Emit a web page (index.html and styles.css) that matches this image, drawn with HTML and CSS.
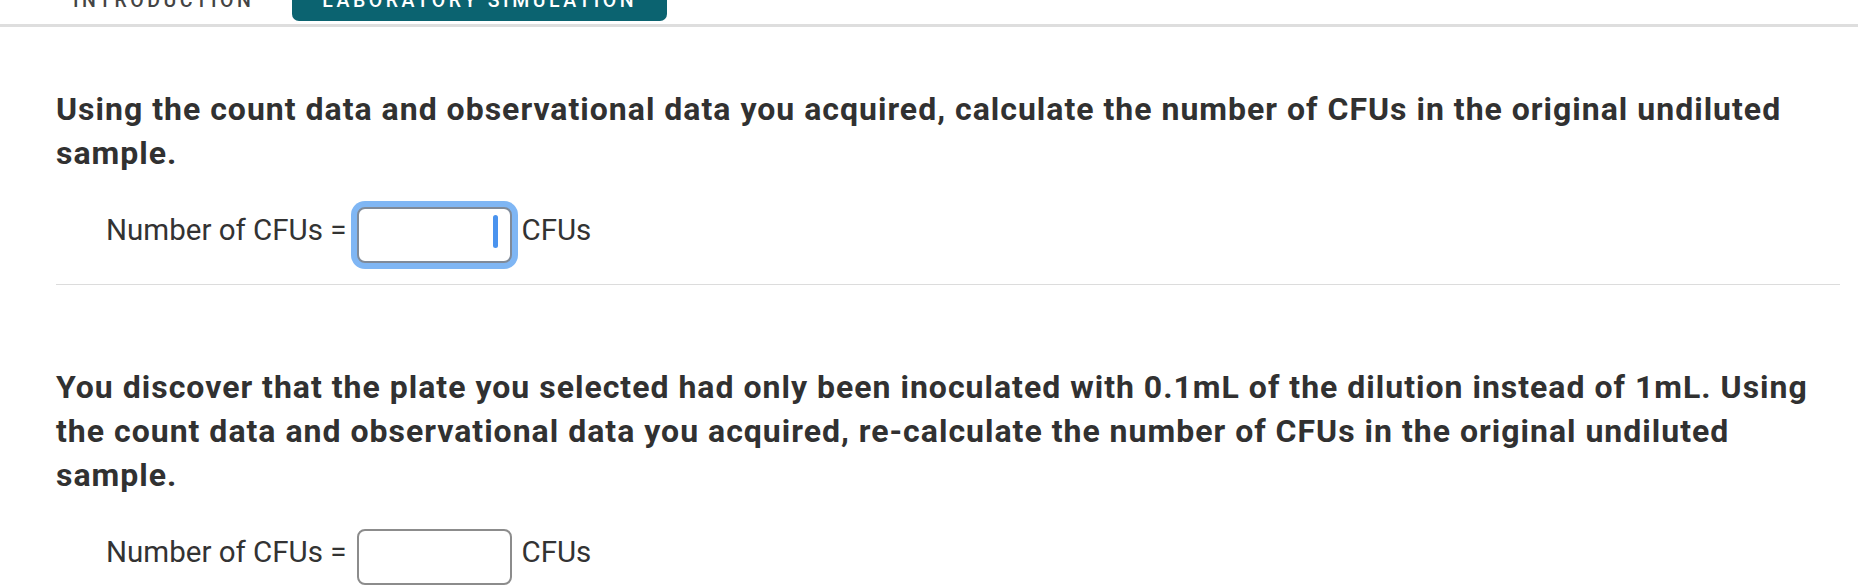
FILE: index.html
```html
<!DOCTYPE html>
<html>
<head>
    <title>Laboratory Simulation</title>
    <link rel="stylesheet" href="styles.css">
</head>
<body>
    <div class="tab-bar"> <!-- Tabs, scrolled partly off the top -->
        <div class="tab">Introduction</div>
        <div class="tab tab-active">Laboratory Simulation</div>
    </div>
    <div class="content">
        <div class="question">
            <p class="question-text">Using the count data and observational data you acquired, calculate the number of CFUs in the original undiluted sample.</p>
            <div class="answer-row">
                <label for="cfu1">Number of CFUs =</label>
                <span class="input-wrap focused">
                    <input type="text" id="cfu1" class="answer-input" />
                    <span class="caret"></span>
                </span>
                <span class="unit">CFUs</span>
            </div>
        </div>
        <div class="question question-last">
            <p class="question-text">You discover that the plate you selected had only been inoculated with 0.1mL of the dilution instead of 1mL. Using the count data and observational data you acquired, re-calculate the number of CFUs in the original undiluted sample.</p>
            <div class="answer-row">
                <label for="cfu2">Number of CFUs =</label>
                <span class="input-wrap">
                    <input type="text" id="cfu2" class="answer-input" />
                </span>
                <span class="unit">CFUs</span>
            </div>
        </div>
    </div>
</body>
</html>
```

FILE: styles.css
```css
body {
    margin: 0;
    background-color: #fff;
    font-family: Roboto, "Liberation Sans", Arial, sans-serif;
    color: #333;
    overflow: hidden;
}

.tab-bar {
    display: flex;
    align-items: flex-start;
    gap: 8px;
    padding-left: 43px;
    margin-top: -21px;
    height: 45px;
    border-bottom: 3px solid #dedede;
}

.tab {
    display: flex;
    align-items: center;
    justify-content: center;
    height: 42px;
    padding: 0 30px;
    font-size: 19.5px;
    font-weight: 500;
    letter-spacing: 3.5px;
    text-transform: uppercase;
    color: #444;
}

.tab-active {
    background-color: #0b6370;
    color: #fff;
    border-radius: 0 0 7px 7px;
}

.content {
    padding: 0 18px 0 56px;
}

.question {
    padding: 60px 0 21px 0;
    border-bottom: 1px solid #dcdcdc;
}

.question-last {
    padding-top: 80px;
    border-bottom: none;
}

.question-text {
    margin: 0;
    font-size: 32px;
    font-weight: 700;
    line-height: 44px;
    letter-spacing: 1px;
    color: #313131;
}

.answer-row {
    display: flex;
    align-items: flex-start;
    margin: 32px 0 0 50px;
    font-size: 29.5px;
    line-height: 46px;
    color: #333;
}

.answer-row label {
    margin-right: 11px;
}

.input-wrap {
    position: relative;
    display: block;
}

.answer-input {
    display: block;
    box-sizing: border-box;
    width: 155px;
    height: 56px;
    border: 2px solid #8c8c8c;
    border-radius: 8px;
    background: #fff;
    outline: none;
}

.focused .answer-input {
    border-color: #7f8a99;
    box-shadow: 0 0 0 6px #7fb6f4;
}

.caret {
    position: absolute;
    top: 8px;
    right: 14px;
    width: 5px;
    height: 33px;
    border-radius: 3px;
    background-color: #4a93ee;
}

.unit {
    margin-left: 9px;
}
```
